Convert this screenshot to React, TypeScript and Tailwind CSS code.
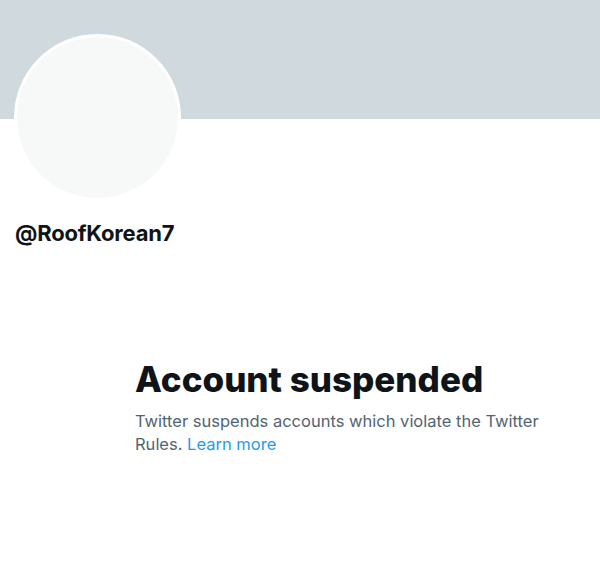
import React from "react";

export default function App() {
  return (
    <div className="w-[600px] h-[565px] bg-white overflow-hidden" style={{ fontFamily: 'Inter, "Liberation Sans", Arial, sans-serif' }}>
      <div className="h-[119px] bg-[#cfd9de]" />
      <div className="relative">
        <div className="absolute left-[14px] top-[-85px] w-[167px] h-[167px] rounded-full bg-white p-[3px]">
          <div className="w-full h-full rounded-full bg-[#f7f9f9]" />
        </div>
        <div className="pt-[101px] pl-[15px]">
          <div className="text-[22px] leading-[26px] font-bold text-[#0f1419] tracking-[-0.2px]">@RoofKorean7</div>
        </div>
        <div className="pt-[113px] pl-[135px] pr-[40px]">
          <div className="text-[35px] leading-[40px] font-extrabold text-[#0f1419]">Account suspended</div>
          <div className="mt-[11px] text-[16.5px] leading-[23px] text-[#536471]">
            Twitter suspends accounts which violate the Twitter Rules.{" "}
            <span className="text-[#1d9bf0]">Learn more</span>
          </div>
        </div>
      </div>
    </div>
  );
}
